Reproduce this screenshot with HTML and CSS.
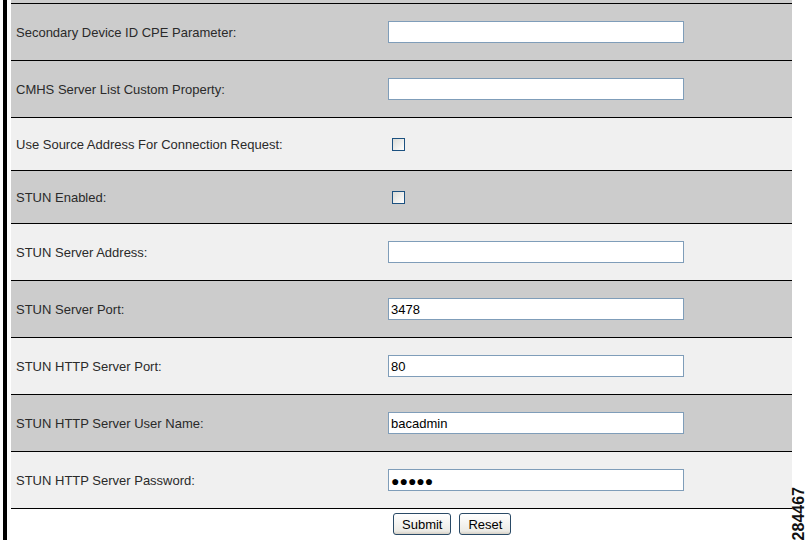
FILE: index.html
```html
<!DOCTYPE html>
<html lang="en">
<head>
    <meta charset="UTF-8">
    <title>STUN Configuration</title>
    <link rel="stylesheet" href="styles.css">
</head>
<body>
    <div class="page">
        <div class="side-bar"></div>
        <form class="config">
            <div class="row gray top-strip"></div>

            <div class="row gray">
                <div class="label">Secondary Device ID CPE Parameter:</div>
                <div class="field"><input type="text" class="text-input"></div>
            </div>
            <div class="row gray">
                <div class="label">CMHS Server List Custom Property:</div>
                <div class="field"><input type="text" class="text-input"></div>
            </div>
            <div class="row light short">
                <div class="label">Use Source Address For Connection Request:</div>
                <div class="field"><input type="checkbox" class="check"></div>
            </div>
            <div class="row gray short">
                <div class="label">STUN Enabled:</div>
                <div class="field"><input type="checkbox" class="check"></div>
            </div>
            <div class="row light">
                <div class="label">STUN Server Address:</div>
                <div class="field"><input type="text" class="text-input"></div>
            </div>
            <div class="row gray">
                <div class="label">STUN Server Port:</div>
                <div class="field"><input type="text" class="text-input" value="3478"></div>
            </div>
            <div class="row light">
                <div class="label">STUN HTTP Server Port:</div>
                <div class="field"><input type="text" class="text-input" value="80"></div>
            </div>
            <div class="row gray">
                <div class="label">STUN HTTP Server User Name:</div>
                <div class="field"><input type="text" class="text-input" value="bacadmin"></div>
            </div>
            <div class="row light">
                <div class="label">STUN HTTP Server Password:</div>
                <div class="field"><input type="text" class="text-input dots" value="●●●●●"></div>
            </div>

            <div class="actions">
                <button type="button" class="btn">Submit</button>
                <button type="button" class="btn">Reset</button>
            </div>
        </form>
    </div>
    <div class="fig-number">284467</div>
</body>
</html>
```

FILE: styles.css
```css
body { margin: 0; padding: 0; background: #fff; font-family: Arial, "Liberation Sans", sans-serif; font-size: 13px; color: #2a2a2a; }
.page { display: flex; height: 540px; }
.side-bar { width: 4px; margin-left: 3px; background: #000; }
.config { width: 781px; margin-left: 4px; }
.row { display: flex; align-items: center; height: 56px; border-bottom: 1px solid #000; }
.row.short { height: 52px; }
.row.top-strip { height: 3px; }
.gray { background-color: #cccccc; }
.light { background-color: #f0f0f0; }
.label { width: 372px; padding-left: 5px; }
.field { flex: 1; display: flex; align-items: center; }
.text-input { box-sizing: border-box; width: 296px; height: 22px; margin: 0; padding: 1px 2px 0; border: 1px solid #7f9db9; background: #fff; font-family: Arial, "Liberation Sans", sans-serif; font-size: 13px; color: #000; outline: none; }
.text-input.dots { font-size: 14px; letter-spacing: 0; }
.check { appearance: none; -webkit-appearance: none; box-sizing: border-box; width: 13px; height: 13px; margin: 0 0 0 4px; border: 1px solid #1c5180; background: linear-gradient(135deg, #dcdcd7 0%, #ffffff 100%); }
.actions { display: flex; gap: 8px; padding: 4px 0 0 382px; }
.btn { box-sizing: border-box; height: 22px; padding: 0 8px; border: 1px solid #2a4a66; border-radius: 3px; background: linear-gradient(#ffffff, #ecebe6 85%, #d6d0c5); font-family: Arial, "Liberation Sans", sans-serif; font-size: 13px; color: #000; }
.fig-number { position: absolute; left: 790px; top: 487px; writing-mode: vertical-rl; transform: rotate(180deg); font-family: Arial, "Liberation Sans", sans-serif; font-size: 16px; font-weight: bold; color: #111; }
```
